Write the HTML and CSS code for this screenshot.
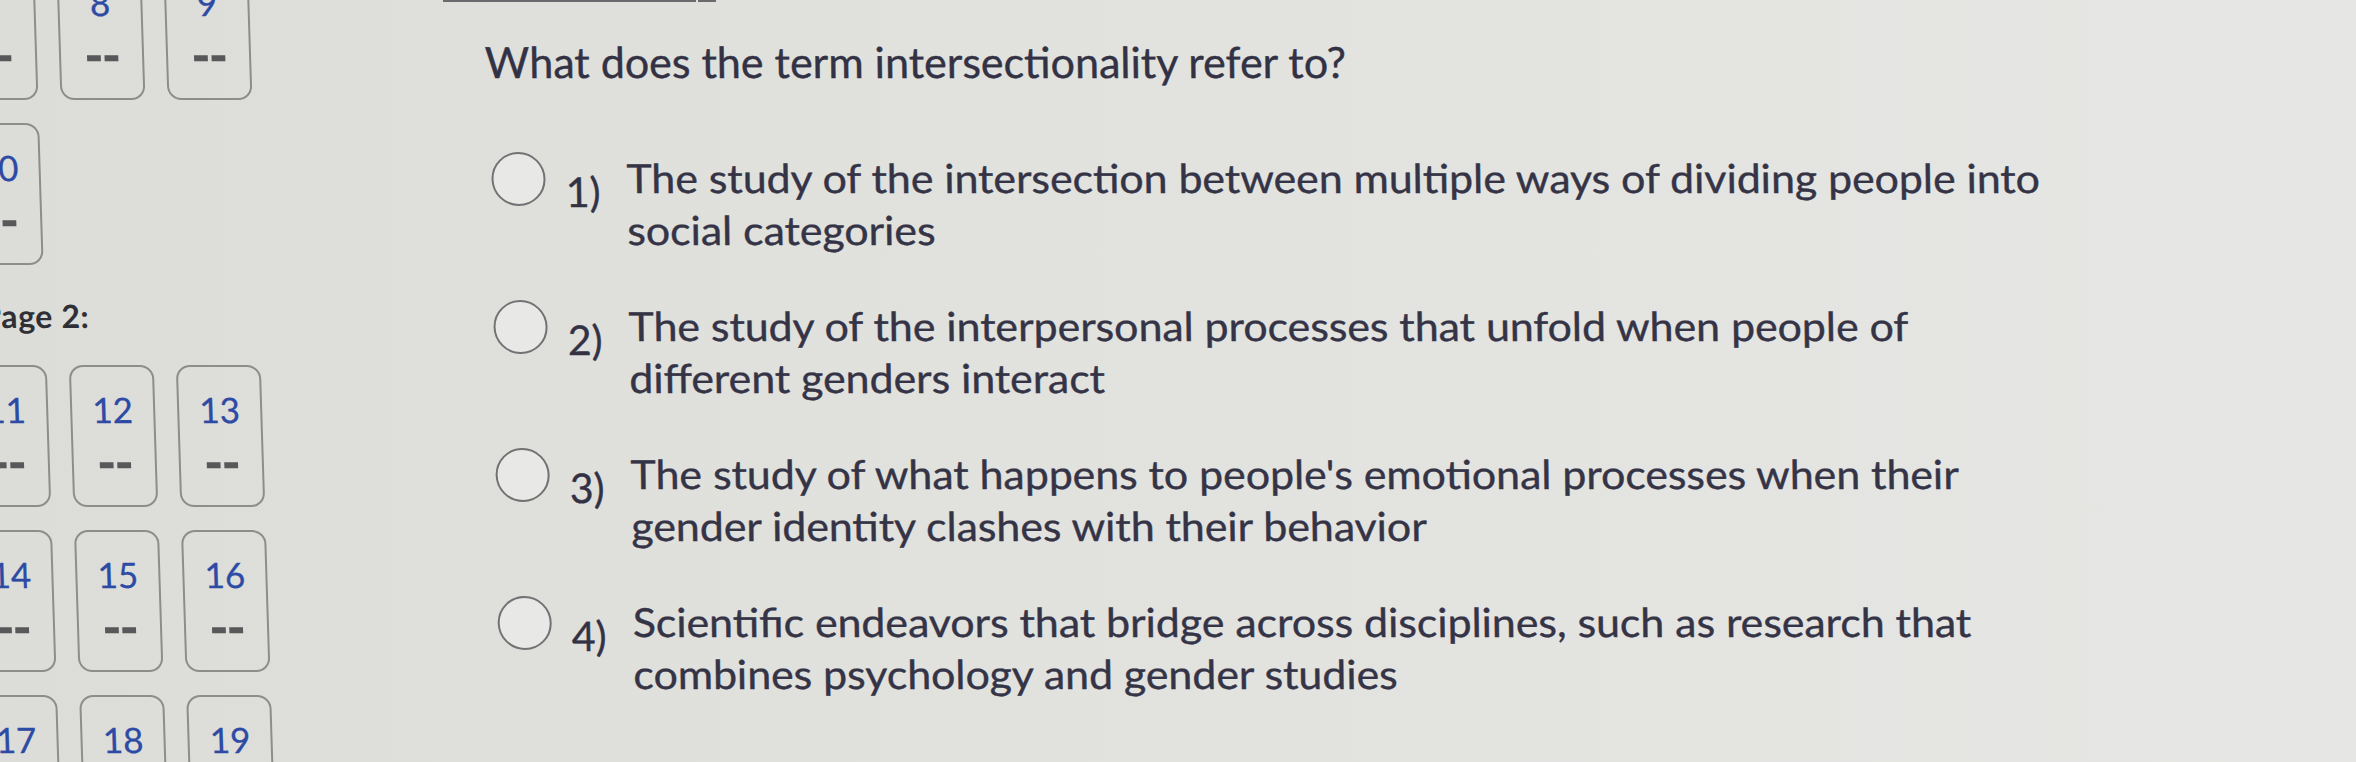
FILE: index.html
```html
<!DOCTYPE html>
<html lang="en">
<head>
<meta charset="utf-8">
<title>Quiz question</title>
<link rel="stylesheet" href="styles.css">
</head>
<body>
<div class="page">
  <aside class="nav">
    <div class="grid">
      <div class="card"><span class="num">7</span><span class="dash">--</span></div>
      <div class="card"><span class="num">8</span><span class="dash">--</span></div>
      <div class="card"><span class="num">9</span><span class="dash">--</span></div>
      <div class="card"><span class="num">10</span><span class="dash">--</span></div>
    </div>
    <h2 class="pagehead">Page 2:</h2>
    <div class="grid">
      <div class="card"><span class="num">11</span><span class="dash">--</span></div>
      <div class="card"><span class="num">12</span><span class="dash">--</span></div>
      <div class="card"><span class="num">13</span><span class="dash">--</span></div>
      <div class="card"><span class="num">14</span><span class="dash">--</span></div>
      <div class="card"><span class="num">15</span><span class="dash">--</span></div>
      <div class="card"><span class="num">16</span><span class="dash">--</span></div>
      <div class="card"><span class="num">17</span><span class="dash">--</span></div>
      <div class="card"><span class="num">18</span><span class="dash">--</span></div>
      <div class="card"><span class="num">19</span><span class="dash">--</span></div>
    </div>
  </aside>
  <main class="main">
    <div class="topbar"><span class="seg"></span><span class="seg short"></span></div>
    <h1 class="question">What does the term intersectionality refer to?</h1>
    <ol class="options">
      <li class="option"><span class="radio"></span><span class="idx">1)</span><span class="text">The study of the intersection between multiple ways of dividing people into social categories</span></li>
      <li class="option"><span class="radio"></span><span class="idx">2)</span><span class="text">The study of the interpersonal processes that unfold when people of different genders interact</span></li>
      <li class="option"><span class="radio"></span><span class="idx">3)</span><span class="text">The study of what happens to people's emotional processes when their gender identity clashes with their behavior</span></li>
      <li class="option"><span class="radio"></span><span class="idx">4)</span><span class="text">Scientific endeavors that bridge across disciplines, such as research that combines psychology and gender studies</span></li>
    </ol>
  </main>
</div>
</body>
</html>
```

FILE: styles.css
```css
html, body {
  margin: 0;
  padding: 0;
  height: 100%;
  overflow: hidden;
}

body {
  background: linear-gradient(to right, #dcdcd9 0%, #e1e1de 40%, #e6e6e4 100%);
  font-family: Lato, "Noto Sans", sans-serif;
  color: #343446;
}

.page {
  display: flex;
  align-items: flex-start;
}

/* ---------- left navigation ---------- */
.nav {
  flex: 0 0 auto;
  margin-left: -51px;
  margin-top: -42px;
  transform: skewX(1.8deg);
  transform-origin: 0 0;
}

.grid {
  display: grid;
  grid-template-columns: repeat(3, 85px);
  column-gap: 22px;
  row-gap: 23px;
}

.card {
  box-sizing: border-box;
  height: 142px;
  border: 2px solid #8d8d8c;
  border-radius: 14px;
  display: flex;
  flex-direction: column;
  align-items: center;
  padding-top: 21px;
}

.num {
  font-size: 35px;
  line-height: 1.2;
  color: #2d4ba4;
  -webkit-text-stroke: 0.3px #2d4ba4;
}

.dash {
  font-size: 52px;
  font-weight: 900;
  line-height: 1;
  letter-spacing: -2px;
  color: #58585a;
  margin-top: 5px;
}

.pagehead {
  margin: 33px 0 31px 21px;
  font-size: 32px;
  line-height: 36px;
  letter-spacing: 0.6px;
  font-weight: 700;
  color: #2f2f36;
}

/* ---------- main question ---------- */
.main {
  flex: 1 1 auto;
  margin-left: 236px;
  transform: skewX(0.8deg);
  transform-origin: 0 0;
}

.topbar {
  display: flex;
  margin-left: -41px;
  height: 2px;
}

.seg {
  width: 253px;
  height: 2px;
  background: #6a6a6c;
}

.seg.short {
  width: 18px;
  margin-left: 2px;
}

.question {
  margin: 35px 0 0 0;
  font-size: 43px;
  line-height: 50px;
  font-weight: 400;
  color: #323244;
  -webkit-text-stroke: 0.4px #323244;
}

.options {
  list-style: none;
  margin: 65px 0 0 5px;
  padding: 0;
  display: flex;
  flex-direction: column;
  gap: 44px;
}

.option {
  display: flex;
  align-items: flex-start;
}

.radio {
  flex: 0 0 auto;
  box-sizing: border-box;
  width: 54px;
  height: 54px;
  margin-top: 0;
  border: 2.5px solid #727274;
  border-radius: 50%;
  background: #e8e8e6;
}

.idx {
  flex: 0 0 auto;
  width: 61px;
  margin-left: 20px;
  margin-top: 15px;
  font-size: 41px;
  line-height: 49px;
  color: #323244;
  -webkit-text-stroke: 0.4px #323244;
}

.text {
  display: block;
  width: 1327px;
  font-size: 40px;
  line-height: 52px;
  color: #343446;
  -webkit-text-stroke: 0.4px #343446;
  transform: scaleX(1.07);
  transform-origin: 0 0;
}
```
